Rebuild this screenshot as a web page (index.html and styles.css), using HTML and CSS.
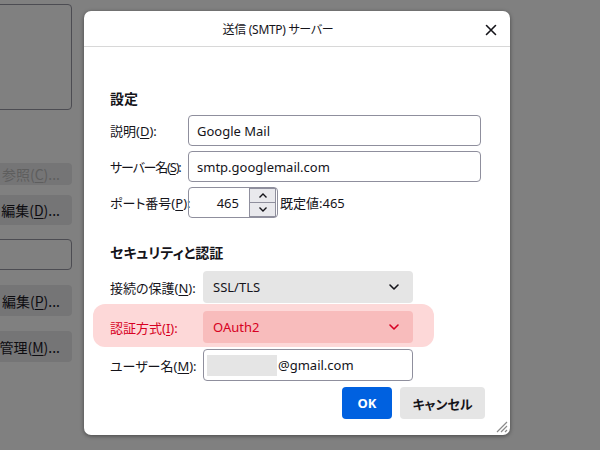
FILE: index.html
```html
<!DOCTYPE html>
<html lang="ja">
<head>
<meta charset="utf-8">
<title>送信 (SMTP) サーバー</title>
<link rel="stylesheet" href="styles.css">
</head>
<body>
<div class="backdrop">
  <div class="bg-box"></div>
  <div class="bg-btn bg-disabled bg-btn-short">参照(<u>C</u>)...</div>
  <div class="bg-btn bg-gap1">編集(<u>D</u>)...</div>
  <div class="bg-input"></div>
  <div class="bg-btn bg-gap2">編集(<u>P</u>)...</div>
  <div class="bg-btn bg-gap2">管理(<u>M</u>)...</div>
</div>

<div class="dialog">
  <div class="dlg-header">
    <span class="dlg-title">送信 (SMTP) サーバー</span>
    <svg class="dlg-close" width="12" height="12" viewBox="0 0 12 12"><path d="M1.5 1.5 L10.5 10.5 M10.5 1.5 L1.5 10.5" stroke="#15141a" stroke-width="1.6" stroke-linecap="round" fill="none"/></svg>
  </div>
  <div class="dlg-body">
    <h2 class="section-title">設定</h2>
    <div class="grid grid-settings">
      <label class="lbl">説明(<u>D</u>):</label>
      <div class="field"><span class="latin">Google Mail</span></div>
      <label class="lbl lbl-tight">サーバー名(<u>S</u>):</label>
      <div class="field"><span class="latin">smtp.googlemail.com</span></div>
      <label class="lbl">ポート番号(<u>P</u>):</label>
      <div class="port-row">
        <div class="port">
          <span class="port-val latin">465</span>
          <div class="spin">
            <div class="spin-btn spin-up"><svg width="10" height="7" viewBox="0 0 10 7"><path d="M1.5 5.5 L5 2 L8.5 5.5" stroke="#15141a" stroke-width="1.4" fill="none"/></svg></div>
            <div class="spin-btn"><svg width="10" height="7" viewBox="0 0 10 7"><path d="M1.5 1.5 L5 5 L8.5 1.5" stroke="#15141a" stroke-width="1.4" fill="none"/></svg></div>
          </div>
        </div>
        <span class="default">既定値:465</span>
      </div>
    </div>

    <h2 class="section-title section2">セキュリティと認証</h2>
    <div class="sec">
      <div class="sec-row">
        <label class="lbl lbl2">接続の保護(<u>N</u>):</label>
        <div class="select"><span class="latin">SSL/TLS</span>
          <svg class="chev" width="12" height="8" viewBox="0 0 12 8"><path d="M2 2 L6 6 L10 2" stroke="#15141a" stroke-width="1.6" fill="none" stroke-linecap="round" stroke-linejoin="round"/></svg>
        </div>
      </div>
      <div class="sec-row hl">
        <label class="lbl lbl2 red">認証方式(<u>I</u>):</label>
        <div class="select select-red"><span class="latin">OAuth2</span>
          <svg class="chev" width="12" height="8" viewBox="0 0 12 8"><path d="M2 2 L6 6 L10 2" stroke="#d70022" stroke-width="1.6" fill="none" stroke-linecap="round" stroke-linejoin="round"/></svg>
        </div>
      </div>
      <div class="sec-row user-row">
        <label class="lbl lbl2">ユーザー名(<u>M</u>):</label>
        <div class="field field-user"><span class="redact"></span><span class="latin">@gmail.com</span></div>
      </div>
    </div>

    <div class="actions">
      <button class="btn btn-primary">OK</button>
      <button class="btn btn-secondary">キャンセル</button>
    </div>
  </div>
  <svg class="grip" width="14" height="14" viewBox="0 0 14 14"><path d="M13 3 L3 13 M13 7 L7 13 M13 11 L11 13" stroke="#8a8a8a" stroke-width="1.2" fill="none"/></svg>
</div>
</body>
</html>
```

FILE: styles.css
```css
* { box-sizing: border-box; }
html, body {
  margin: 0;
  width: 600px;
  height: 450px;
  overflow: hidden;
}
body {
  background: #808080;
  font-family: "Noto Sans", "Noto Sans CJK JP", sans-serif;
  color: #15141a;
  position: relative;
}
u { text-decoration: underline; text-underline-offset: 2px; }

/* backdrop (page under the modal) */
.backdrop {
  display: flex;
  flex-direction: column;
  width: 82px;
  margin-left: -10px;
  padding-top: 4px;
  font-family: "Noto Sans CJK JP", sans-serif;
  font-feature-settings: "palt";
  font-size: 14px;
  color: #0d0c10;
}
.bg-box {
  height: 106px;
  border: 1px solid #4c4c52;
  border-radius: 4px;
}
.bg-btn {
  height: 31px;
  background: #757576;
  border-radius: 4px;
  display: flex;
  align-items: center;
  justify-content: flex-end;
  padding-right: 12px;
}
.bg-btn-short { margin-top: 53px; height: 22px; }
.bg-disabled { color: #5e5e5e; }
.bg-gap1 { margin-top: 10px; height: 30px; }
.bg-gap2 { margin-top: 15px; }
.bg-input {
  margin-top: 14px;
  height: 31px;
  border: 1px solid #4c4c52;
  border-radius: 4px;
}

/* dialog */
.dialog {
  position: absolute;
  left: 84px;
  top: 11px;
  width: 426px;
  height: 424px;
  background: #fff;
  border-radius: 7px;
  box-shadow: 0 1px 4px rgba(0,0,0,0.45);
  display: flex;
  flex-direction: column;
}
.dlg-header {
  height: 36px;
  border-bottom: 1px solid #d8d8d8;
  display: flex;
  align-items: center;
  justify-content: center;
  padding-right: 38px;
  position: relative;
}
.dlg-title {
  font-size: 12px;
  font-feature-settings: "palt";
  letter-spacing: -0.3px;
}
.dlg-close {
  position: absolute;
  right: 13px;
  top: 13px;
}
.dlg-body {
  padding: 42px 29px 0 26px;
  display: flex;
  flex-direction: column;
  font-size: 13px;
  font-feature-settings: "palt";
}
.section-title {
  margin: 0;
  font-size: 14px;
  line-height: 20px;
  font-weight: 700;
}
.section2 { margin-top: 25px; }
.grid-settings {
  margin-top: 6px;
  display: grid;
  grid-template-columns: 78px 1fr;
  grid-auto-rows: 31px;
  row-gap: 5px;
  align-items: center;
}
.lbl { white-space: nowrap; }
.lbl-tight { letter-spacing: -1.2px; }
.field {
  height: 31px;
  border: 1px solid #8f8f9d;
  border-radius: 4px;
  display: flex;
  align-items: center;
  padding-left: 8px;
}
.latin { font-family: "Noto Sans", sans-serif; letter-spacing: 0; }
.port-row {
  display: flex;
  align-items: center;
  height: 31px;
}
.port {
  width: 90px;
  height: 31px;
  border: 1px solid #8f8f9d;
  border-radius: 4px;
  display: flex;
  align-items: center;
  justify-content: flex-end;
  padding-right: 1px;
}
.port-val { margin-right: 10px; }
.spin {
  width: 27px;
  height: 29px;
  display: flex;
  flex-direction: column;
}
.spin-btn {
  flex: 1;
  background: #e9e9ed;
  border: 1px solid #8f8f9d;
  display: flex;
  align-items: center;
  justify-content: center;
}
.spin-up { border-bottom: none; }
.default { margin-left: 2px; }

.sec { margin-top: 8px; display: flex; flex-direction: column; }
.sec-row {
  display: flex;
  align-items: center;
  height: 32px;
}
.lbl2 { width: 93px; flex: none; }
.select {
  width: 210px;
  height: 32px;
  background: #e5e5e5;
  border-radius: 4px;
  display: flex;
  align-items: center;
  justify-content: space-between;
  padding: 0 13px 0 10px;
}
.hl {
  margin: 1px 47px 0 -17px;
  padding: 7px 0 4px 17px;
  height: 43px;
  background: #fdd8d8;
  border-radius: 12px;
  color: #d70022;
}
.select-red { background: #f8bcbc; color: #d70022; }
.red { color: #d70022; }
.user-row { margin-top: 2px; }
.field-user {
  width: 210px;
  height: 32px;
  padding-left: 3px;
}
.redact {
  width: 70px;
  height: 21px;
  background: #e5e5e5;
  margin-right: 1px;
}
.actions {
  margin-top: 6px;
  margin-right: -4px;
  display: flex;
  justify-content: flex-end;
  gap: 8px;
}
.btn {
  height: 32px;
  border: none;
  border-radius: 4px;
  font-family: "Noto Sans", "Noto Sans CJK JP", sans-serif;
  font-feature-settings: "palt";
  font-size: 13px;
  font-weight: 700;
  padding: 0;
}
.btn-primary { width: 50px; background: #0061e0; color: #fff; }
.btn-secondary { width: 85px; background: #e5e5e5; color: #15141a; }
.grip {
  position: absolute;
  right: 2px;
  bottom: 2px;
}
```
